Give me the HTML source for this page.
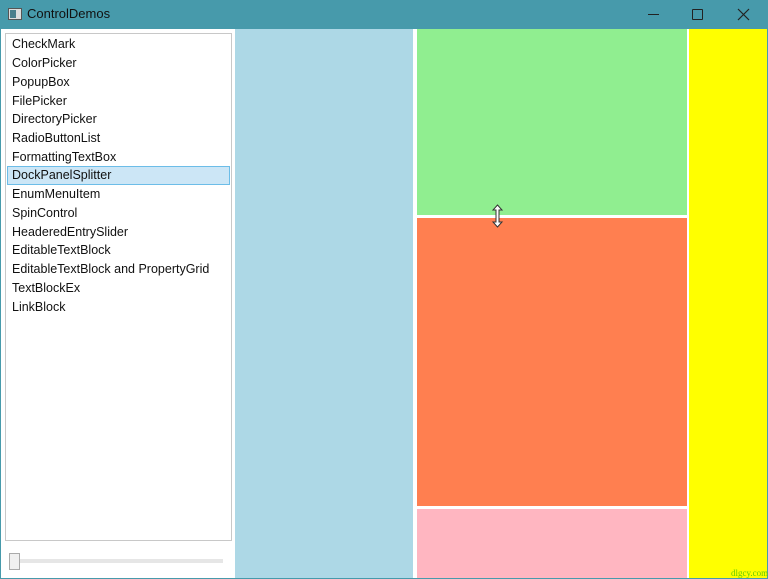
<!DOCTYPE html>
<html><head><style>
*{margin:0;padding:0;box-sizing:border-box}
body{width:768px;height:579px;overflow:hidden;background:#479aab;font-family:"Segoe UI","Liberation Sans",sans-serif;position:relative}
.abs{position:absolute}
.title{left:27px;top:6px;font-size:13px;color:#111}
.item{position:absolute;left:12px;font-size:12.5px;color:#111;line-height:18px}
</style></head><body>
<div class="abs" style="left:8px;top:8px;width:14px;height:12px;border:1px solid #555;background:#ddd"><div style="width:6px;height:8px;background:#4a7f8c;margin:1px"></div></div>
<div class="abs title">ControlDemos</div>
<div class="abs" style="left:648px;top:14px;width:11px;height:1px;background:#222"></div>
<div class="abs" style="left:692px;top:9px;width:11px;height:11px;border:1px solid #222;border-radius:1px"></div>
<svg class="abs" style="left:737px;top:8px" width="13" height="13"><path d="M1 1L12 12M12 1L1 12" stroke="#222" stroke-width="1.2"/></svg>
<div class="abs" style="left:1px;top:29px;width:234px;height:549px;background:#fff"></div>
<div class="abs" style="left:5px;top:33px;width:227px;height:508px;border:1px solid #c8c8c8;background:#fff"></div>
<div class="abs" style="left:7px;top:166px;width:223px;height:19px;background:#cce6f6;border:1px solid #6cbde8"></div>
<div class="item" style="top:35px">CheckMark</div>
<div class="item" style="top:54px">ColorPicker</div>
<div class="item" style="top:73px">PopupBox</div>
<div class="item" style="top:92px">FilePicker</div>
<div class="item" style="top:110px">DirectoryPicker</div>
<div class="item" style="top:129px">RadioButtonList</div>
<div class="item" style="top:148px">FormattingTextBox</div>
<div class="item" style="top:166px">DockPanelSplitter</div>
<div class="item" style="top:185px">EnumMenuItem</div>
<div class="item" style="top:204px">SpinControl</div>
<div class="item" style="top:223px">HeaderedEntrySlider</div>
<div class="item" style="top:241px">EditableTextBlock</div>
<div class="item" style="top:260px">EditableTextBlock and PropertyGrid</div>
<div class="item" style="top:279px">TextBlockEx</div>
<div class="item" style="top:298px">LinkBlock</div>
<div class="abs" style="left:10px;top:559px;width:213px;height:4px;background:#e6e6e6"></div>
<div class="abs" style="left:9px;top:553px;width:11px;height:17px;background:#f0f0f0;border:1px solid #aaa"></div>
<div class="abs" style="left:235px;top:29px;width:178px;height:549px;background:#add8e6"></div>
<div class="abs" style="left:413px;top:29px;width:276px;height:549px;background:#fff"></div>
<div class="abs" style="left:417px;top:29px;width:270px;height:186px;background:#90ee90"></div>
<div class="abs" style="left:417px;top:218px;width:270px;height:288px;background:#ff7f50"></div>
<div class="abs" style="left:417px;top:509px;width:270px;height:69px;background:#ffb6c1"></div>
<div class="abs" style="left:689px;top:29px;width:78px;height:549px;background:#ffff00"></div>
<svg class="abs" style="left:491px;top:204px" width="13" height="24"><path d="M6.5 1L11 6H8V18H11L6.5 23L2 18H5V6H2Z" fill="#fff" stroke="#333" stroke-width="1"/></svg>
<div class="abs" style="left:731px;top:568px;font-size:9px;color:#6c0;font-family:'Liberation Serif',serif">dlgcy.com</div>
</body></html>
